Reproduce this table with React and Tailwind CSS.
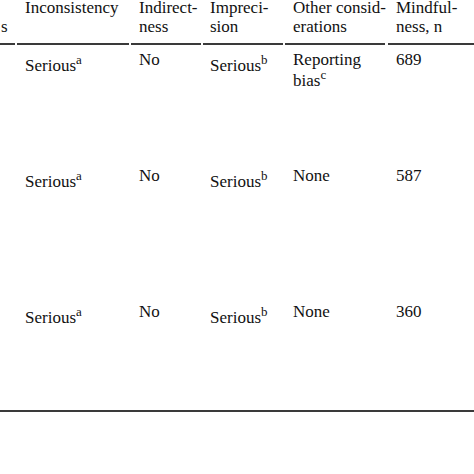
import React from 'react';

const cols = [
    { w: 'w-[15px]', pad: 'pl-[1px]' },
    { w: 'w-[112px]', pad: 'pl-[8px]' },
    { w: 'w-[70px]', pad: 'pl-[8px]' },
    { w: 'w-[80px]', pad: 'pl-[7px]' },
    { w: 'w-[100px]', pad: 'pl-[8px]' },
    { w: 'w-[86px]', pad: 'pl-[8px]' },
];

const gaps = ['mr-[2px]', 'mr-[2px]', 'mr-[2px]', 'mr-[2px]', 'mr-[3px]', ''];

const header = [
    ['', 's'],
    ['Inconsistency', ''],
    ['Indirect-', 'ness'],
    ['Impreci-', 'sion'],
    ['Other consid-', 'erations'],
    ['Mindful-', 'ness, n'],
];

const Sup = ({ children }) => (
    <sup className="text-[13px] -top-[7px]">{children}</sup>
);

const Serious = ({ mark }) => (
    <div className="pt-[6px]">
        Serious<Sup>{mark}</Sup>
    </div>
);

const rows = [
    { h: 'h-[116px]', other: <><div>Reporting</div><div className="mt-[2px]">bias<Sup>c</Sup></div></>, n: '689' },
    { h: 'h-[136px]', other: 'None', n: '587' },
    { h: 'h-[113px]', other: 'None', n: '360' },
];

export default function App() {
    return (
        <div className="w-[474px] h-[474px] bg-white overflow-hidden text-[#111] text-[17px] leading-[19px]" style={{ fontFamily: '"Liberation Serif", "Times New Roman", serif' }}>
            <div className="flex">
                {header.map((lines, i) => (
                    <div key={i} className={`${cols[i].w} ${cols[i].pad} ${gaps[i]} shrink-0 whitespace-nowrap pb-[7px] border-b-2 border-[#3a3a3a]`}>
                        <div className="h-[15px] leading-[15px]">{lines[0]}</div>
                        <div className="h-[19px] mt-[2px]">{lines[1]}</div>
                    </div>
                ))}
            </div>
            {rows.map((r, ri) => (
                <div key={ri} className={`flex ${r.h} pt-[5px]`}>
                    <div className={`${cols[0].w} ${gaps[0]} shrink-0`} />
                    <div className={`${cols[1].w} ${cols[1].pad} ${gaps[1]} shrink-0`}><Serious mark="a" /></div>
                    <div className={`${cols[2].w} ${cols[2].pad} ${gaps[2]} shrink-0`}>No</div>
                    <div className={`${cols[3].w} ${cols[3].pad} ${gaps[3]} shrink-0`}><Serious mark="b" /></div>
                    <div className={`${cols[4].w} ${cols[4].pad} ${gaps[4]} shrink-0 whitespace-nowrap`}>{r.other}</div>
                    <div className={`${cols[5].w} ${cols[5].pad} shrink-0`}>{r.n}</div>
                </div>
            ))}
            <div className="h-[2px] bg-[#3a3a3a]" />
        </div>
    );
}
